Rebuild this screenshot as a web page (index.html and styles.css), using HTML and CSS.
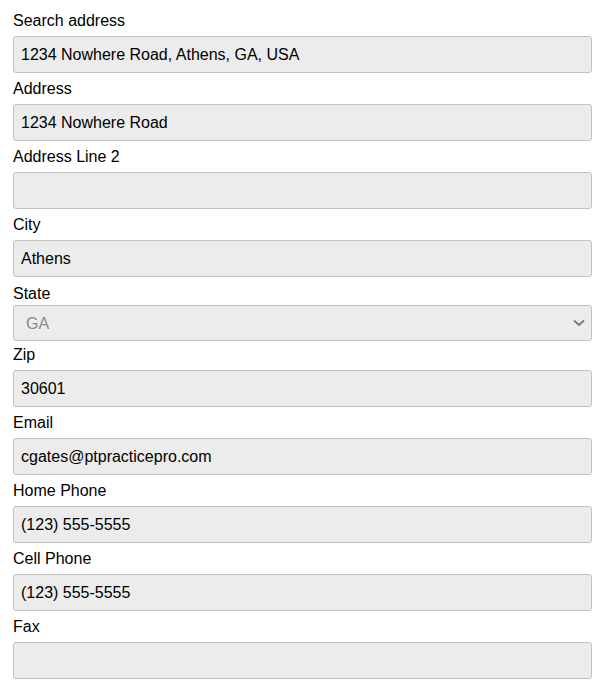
FILE: index.html
```html
<!DOCTYPE html>
<html lang="en">
<head>
<meta charset="utf-8">
<title>Address form</title>
<link rel="stylesheet" href="styles.css">
</head>
<body>
<form class="form">
  <div class="group">
    <label class="label" for="search">Search address</label>
    <input class="field" id="search" type="text" value="1234 Nowhere Road, Athens, GA, USA" readonly>
  </div>
  <div class="group">
    <label class="label" for="addr">Address</label>
    <input class="field" id="addr" type="text" value="1234 Nowhere Road" readonly>
  </div>
  <div class="group">
    <label class="label" for="addr2">Address Line 2</label>
    <input class="field" id="addr2" type="text" value="" readonly>
  </div>
  <div class="group">
    <label class="label" for="city">City</label>
    <input class="field" id="city" type="text" value="Athens" readonly>
  </div>
  <div class="group group-select">
    <label class="label" for="state">State</label>
    <div class="select-wrap">
      <select class="field select" id="state" disabled>
        <option selected>GA</option>
      </select>
      <svg class="chevron" width="12" height="8" viewBox="0 0 12 8" aria-hidden="true">
        <path d="M1 1.5 L6 6 L11 1.5" fill="none" stroke="#7a7a7a" stroke-width="2"/>
      </svg>
    </div>
  </div>
  <div class="group group-after-select">
    <label class="label" for="zip">Zip</label>
    <input class="field" id="zip" type="text" value="30601" readonly>
  </div>
  <div class="group">
    <label class="label" for="email">Email</label>
    <input class="field" id="email" type="text" value="cgates@ptpracticepro.com" readonly>
  </div>
  <div class="group">
    <label class="label" for="home">Home Phone</label>
    <input class="field" id="home" type="text" value="(123) 555-5555" readonly>
  </div>
  <div class="group">
    <label class="label" for="cell">Cell Phone</label>
    <input class="field" id="cell" type="text" value="(123) 555-5555" readonly>
  </div>
  <div class="group">
    <label class="label" for="fax">Fax</label>
    <input class="field" id="fax" type="text" value="" readonly>
  </div>
</form>
</body>
</html>
```

FILE: styles.css
```css
html, body {
  margin: 0;
  padding: 0;
  background: #ffffff;
}

body {
  font-family: "Liberation Sans", Arial, sans-serif;
  font-size: 16px;
  color: #000000;
}

.form {
  display: flex;
  flex-direction: column;
  padding: 5px 16px 0 13px;
  width: 579px;
}

.group {
  display: flex;
  flex-direction: column;
}

.label {
  display: block;
  line-height: 18px;
  margin: 7px 0 6px 0;
  color: #000000;
}

.field {
  box-sizing: border-box;
  width: 579px;
  height: 37px;
  margin: 0;
  padding: 0 7px;
  font-family: "Liberation Sans", Arial, sans-serif;
  font-size: 16px;
  color: #000000;
  background: #ececec;
  border: 1px solid #c2c2c2;
  border-radius: 3px;
  outline: none;
}

.group-select .label {
  margin: 8px 0 2px 0;
}

.select-wrap {
  position: relative;
  display: flex;
}

.select {
  appearance: none;
  -webkit-appearance: none;
  height: 36px;
  padding: 0 12px;
  color: #8a8a8a;
  opacity: 1;
}

.chevron {
  position: absolute;
  right: 7px;
  top: 14px;
}

.group-after-select .label {
  margin: 5px 0 6px 0;
}
```
